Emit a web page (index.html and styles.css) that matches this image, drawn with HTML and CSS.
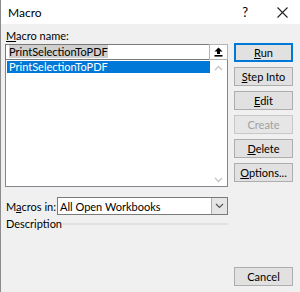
FILE: index.html
```html
<!DOCTYPE html>
<html lang="en">
<head>
    <meta charset="UTF-8">
    <title>Macro</title>
    <link rel="stylesheet" href="styles.css">
</head>
<body>

    <div class="dialog">
        <div class="titlebar">
            <span class="title">Macro</span>
            <span class="help">?</span>
            <svg class="close" width="11" height="11" viewBox="0 0 11 11">
                <path d="M0.5 0.5 L10.5 10.5 M10.5 0.5 L0.5 10.5" stroke="#222" stroke-width="1.1" fill="none"/>
            </svg>
        </div>

        <div class="content">
            <div class="main">
                <div class="left">
                    <div class="label"><u>M</u>acro name:</div>
                    <div class="name-row">
                        <div class="name-input"><span class="sel-text">PrintSelectionToPDF</span></div>
                        <div class="collapse-btn">
                            <svg width="9" height="10" viewBox="0 0 9 10">
                                <path d="M4.5 0.5 L8.5 4.5 L6 4.5 L6 7 L3 7 L3 4.5 L0.5 4.5 Z" fill="#000"/>
                                <rect x="0.5" y="8" width="8" height="1.6" fill="#000"/>
                            </svg>
                        </div>
                    </div>
                    <div class="macro-list">
                        <div class="items">
                            <div class="item selected">PrintSelectionToPDF</div>
                        </div>
                        <div class="scrollbar">
                            <svg width="9" height="6" viewBox="0 0 9 6">
                                <path d="M1 5 L4.5 1.5 L8 5" stroke="#c4c4c4" stroke-width="1.3" fill="none"/>
                            </svg>
                            <svg width="9" height="6" viewBox="0 0 9 6">
                                <path d="M1 1 L4.5 4.5 L8 1" stroke="#c4c4c4" stroke-width="1.3" fill="none"/>
                            </svg>
                        </div>
                    </div>
                </div>

                <div class="buttons">
                    <button class="btn default"><u>R</u>un</button>
                    <button class="btn"><u>S</u>tep Into</button>
                    <button class="btn"><u>E</u>dit</button>
                    <button class="btn disabled">Create</button>
                    <button class="btn"><u>D</u>elete</button>
                    <button class="btn"><u>O</u>ptions...</button>
                </div>
            </div>

            <div class="macros-in">
                <div class="label in-label">M<u>a</u>cros in:</div>
                <div class="combo">
                    <span class="combo-text">All Open Workbooks</span>
                    <div class="combo-btn">
                        <svg width="9" height="6" viewBox="0 0 9 6">
                            <path d="M1 1 L4.5 4.5 L8 1" stroke="#555" stroke-width="1.2" fill="none"/>
                        </svg>
                    </div>
                </div>
            </div>

            <div class="description">
                <div class="label">Description</div>
                <div class="desc-line"></div>
            </div>

            <div class="footer">
                <button class="btn">Cancel</button>
            </div>
        </div>
    </div>

</body>
</html>
```

FILE: styles.css
```css
body {
    margin: 0;
    font-family: Lato, "Noto Sans", sans-serif;
    font-size: 11px;
    color: #000;
}

.dialog {
    width: 300px;
    height: 292px;
    background-color: #f0f0f0;
    border-left: 1px solid #8c8c8c;
    box-sizing: border-box;
    overflow: hidden;
}

.titlebar {
    height: 24px;
    background-color: #fff;
    display: flex;
    align-items: center;
    padding-left: 7px;
    font-size: 12px;
}

.title {
    flex: 1;
}

.help {
    margin-right: 29px;
    font-size: 13px;
}

.close {
    margin-right: 12px;
}

.content {
    padding: 4px 6px 0 4px;
}

.main {
    display: flex;
    gap: 6px;
}

.left {
    width: 223px;
}

.label {
    height: 15px;
    line-height: 15px;
    padding-left: 1px;
    white-space: nowrap;
}

.name-row {
    display: flex;
    height: 16px;
    margin-top: 1px;
}

.name-input {
    flex: 1;
    background-color: #fff;
    border: 1px solid #7a7a7a;
    border-right: none;
    padding-left: 3px;
    line-height: 14px;
}

.sel-text {
    background-color: #cfcfcf;
}

.collapse-btn {
    width: 17px;
    background-color: #fff;
    border: 1px solid #b4b4b4;
    display: flex;
    align-items: center;
    justify-content: center;
}

.macro-list {
    height: 127px;
    display: flex;
    background-color: #fff;
    border: 1px solid #828790;
    border-top: none;
    box-sizing: border-box;
}

.items {
    flex: 1;
    padding: 1px 0 0 1px;
}

.item {
    height: 12px;
    line-height: 12px;
    padding-left: 2px;
}

.item.selected {
    background-color: #0078d7;
    color: #fff;
}

.scrollbar {
    width: 17px;
    display: flex;
    flex-direction: column;
    justify-content: space-between;
    align-items: center;
    padding: 5px 0 3px;
}

.buttons {
    display: flex;
    flex-direction: column;
    gap: 5px;
    padding-top: 15px;
}

.btn {
    width: 59px;
    height: 19px;
    padding: 0;
    background-color: #e1e1e1;
    border: 1px solid #adadad;
    font-family: Lato, "Noto Sans", sans-serif;
    font-size: 11px;
    color: #000;
}

.btn.default {
    border: 2px solid #0078d7;
}

.btn.disabled {
    background-color: #e6e6e6;
    border-color: #c8c8c8;
    color: #a0a0a0;
}

.macros-in {
    display: flex;
    align-items: center;
    width: 223px;
    margin-top: 10px;
    height: 18px;
}

.in-label {
    width: 51px;
}

.combo {
    width: 171px;
    height: 18px;
    box-sizing: border-box;
    background-color: #fff;
    border: 1px solid #7a7a7a;
    display: flex;
    align-items: center;
}

.combo-text {
    flex: 1;
    padding-left: 2px;
}

.combo-btn {
    width: 15px;
    height: 16px;
    background-color: #e5e5e5;
    border-left: 1px solid #adadad;
    display: flex;
    align-items: center;
    justify-content: center;
}

.description {
    display: flex;
    align-items: center;
    width: 223px;
    margin-top: 1px;
}

.desc-line {
    width: 169px;
    height: 2px;
    margin-left: auto;
    background-color: #e2e2e2;
}

.footer {
    display: flex;
    justify-content: flex-end;
    margin-top: 36px;
    padding-right: 1px;
}
```
